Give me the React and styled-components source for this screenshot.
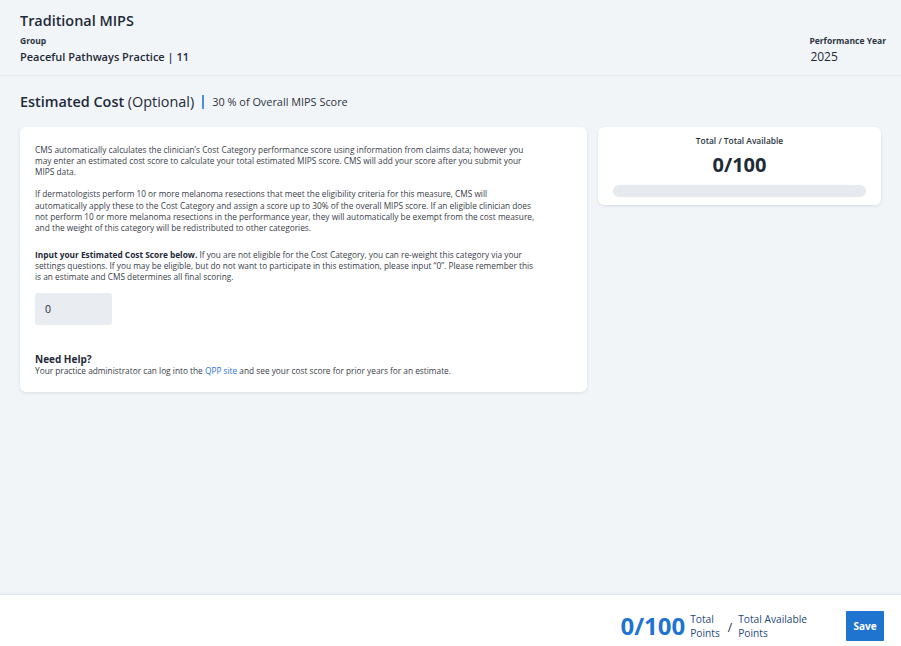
import React, { useState } from "react";
import styled, { createGlobalStyle } from "styled-components";

const GlobalStyle = createGlobalStyle`
  html, body {
    margin: 0;
    padding: 0;
    height: 100%;
  }
  body {
    font-family: "Open Sans", "Noto Sans", Arial, sans-serif;
    color: #1e2a38;
    background: #f2f5f8;
  }
  #root {
    height: 100%;
  }
`;

export default function App() {
  const [cost, setCost] = useState("0");

  return (
    <>
      <GlobalStyle />
      <Page>
        <Header>
          <div>
            <Title>Traditional MIPS</Title>
            <Label>Group</Label>
            <Value>Peaceful Pathways Practice | 11</Value>
          </div>
          <YearBlock>
            <Label>Performance Year</Label>
            <Value $light>2025</Value>
          </YearBlock>
        </Header>

        <Main>
          <SectionTitle>
            <strong>Estimated Cost</strong> (Optional)
            <Divider />
            <small>30 % of Overall MIPS Score</small>
          </SectionTitle>

          <Columns>
            <Card $pad="16.5px 15px 15.5px">
              <Para>
                CMS automatically calculates the clinician’s Cost Category performance score using information from claims data; however you
                <br />
                may enter an estimated cost score to calculate your total estimated MIPS score. CMS will add your score after you submit your
                <br />
                MIPS data.
              </Para>
              <Para $top="11px">
                If dermatologists perform 10 or more melanoma resections that meet the eligibility criteria for this measure, CMS will
                <br />
                automatically apply these to the Cost Category and assign a score up to 30% of the overall MIPS score. If an eligible clinician does
                <br />
                not perform 10 or more melanoma resections in the performance year, they will automatically be exempt from the cost measure,
                <br />
                and the weight of this category will be redistributed to other categories.
              </Para>
              <Para $top="15px">
                <b>Input your Estimated Cost Score below.</b> If you are not eligible for the Cost Category, you can re-weight this category via your
                <br />
                settings questions. If you may be eligible, but do not want to participate in this estimation, please input “0”. Please remember this
                <br />
                is an estimate and CMS determines all final scoring.
              </Para>
              <ScoreInput value={cost} onChange={(e) => setCost(e.target.value)} />
              <HelpTitle>Need Help?</HelpTitle>
              <HelpText>
                Your practice administrator can log into the <a href="#">QPP site</a> and see your cost score for prior years for an estimate.
              </HelpText>
            </Card>

            <Card $pad="8px 15px 8px" $center>
              <TotalLabel>Total / Total Available</TotalLabel>
              <TotalValue>0/100</TotalValue>
              <Progress>
                <ProgressFill style={{ width: "0%" }} />
              </Progress>
            </Card>
          </Columns>
        </Main>

        <Footer>
          <BigScore>0/100</BigScore>
          <SmallLabel>
            Total
            <br />
            Points
          </SmallLabel>
          <Slash>/</Slash>
          <SmallLabel>
            Total Available
            <br />
            Points
          </SmallLabel>
          <SaveButton>Save</SaveButton>
        </Footer>
      </Page>
    </>
  );
}

const Page = styled.div`
  min-height: 100%;
  display: flex;
  flex-direction: column;
`;

const Header = styled.header`
  display: flex;
  justify-content: space-between;
  padding: 10px 15px 10px 20px;
  border-bottom: 1px solid #e8ebee;
  height: 55px;
`;

const Title = styled.h1`
  margin: 0 0 3px;
  font-size: 14.4px;
  font-weight: 600;
  line-height: 22px;
  color: #1e2a38;
`;

const Label = styled.div`
  font-size: 8.5px;
  font-weight: 700;
  line-height: 11px;
  color: #2b3440;
  white-space: nowrap;
`;

const Value = styled.div`
  margin-top: 3px;
  font-size: ${(p) => (p.$light ? "12px" : "11px")};
  font-weight: ${(p) => (p.$light ? 500 : 600)};
  line-height: 16px;
  padding-left: ${(p) => (p.$light ? "1px" : "0")};
  color: #1e2a38;
`;

const YearBlock = styled.div`
  padding-top: 25px;
`;

const Main = styled.main`
  flex: 1;
  padding: 16px 20px;
`;

const SectionTitle = styled.div`
  display: flex;
  align-items: center;
  font-size: 14.4px;
  line-height: 20px;
  color: #1e2a38;
  white-space: pre;
  strong {
    font-weight: 600;
  }
  small {
    font-size: 10.9px;
    color: #2b3440;
  }
`;

const Divider = styled.span`
  display: inline-block;
  width: 2px;
  height: 14px;
  background: #4a8fd8;
  margin: 0 8px;
`;

const Columns = styled.div`
  display: grid;
  grid-template-columns: 567px 283px;
  gap: 11px;
  align-items: start;
  margin-top: 15px;
`;

const Card = styled.section`
  background: #fff;
  border-radius: 6px;
  box-shadow: 0 1px 3px rgba(30, 42, 56, 0.12);
  padding: ${(p) => p.$pad};
  text-align: ${(p) => (p.$center ? "center" : "left")};
`;

const Para = styled.p`
  margin: ${(p) => p.$top || "0"} 0 0;
  font-size: 8.3px;
  line-height: 11.3px;
  color: #38404a;
  white-space: nowrap;
  b {
    font-weight: 700;
    color: #1e2a38;
  }
`;

const ScoreInput = styled.input`
  display: block;
  box-sizing: border-box;
  width: 77px;
  height: 32px;
  margin-top: 10.5px;
  padding: 0 10px;
  border: none;
  border-radius: 3px;
  background: #e9ecf0;
  font-family: inherit;
  font-size: 10.5px;
  color: #1e2a38;
  outline: none;
`;

const HelpTitle = styled.div`
  margin-top: 28.5px;
  font-size: 10px;
  font-weight: 700;
  line-height: 13px;
  color: #1e2a38;
`;

const HelpText = styled.div`
  font-size: 8.3px;
  line-height: 10px;
  color: #38404a;
  a {
    color: #1f74d0;
    text-decoration: none;
  }
`;

const TotalLabel = styled.div`
  font-size: 8.4px;
  font-weight: 600;
  line-height: 12px;
  color: #2b3440;
`;

const TotalValue = styled.div`
  margin-top: 5px;
  font-size: 20px;
  font-weight: 700;
  line-height: 26px;
  color: #1e2a38;
`;

const Progress = styled.div`
  margin-top: 7px;
  height: 12px;
  border-radius: 6px;
  background: #e6e9ee;
  overflow: hidden;
`;

const ProgressFill = styled.div`
  height: 100%;
  background: #1f74d0;
`;

const Footer = styled.footer`
  display: flex;
  align-items: center;
  justify-content: flex-end;
  box-sizing: border-box;
  height: 52px;
  padding: 11px 17px 0 20px;
  background: #fff;
  border-top: 1px solid #e4e8ec;
  box-shadow: 0 -1px 2px rgba(30, 42, 56, 0.05);
`;

const BigScore = styled.div`
  font-size: 24px;
  font-weight: 700;
  color: #1f74d0;
  line-height: 30px;
  margin-right: 5px;
`;

const SmallLabel = styled.div`
  font-size: 10.2px;
  font-weight: 500;
  line-height: 14px;
  color: #1f4a7a;
`;

const Slash = styled.div`
  font-size: 12px;
  color: #1e2a38;
  margin: 2px 6px 0 8px;
`;

const SaveButton = styled.button`
  margin-left: 39px;
  width: 38px;
  height: 30px;
  border: none;
  border-radius: 1px;
  background: #1f74d0;
  color: #fff;
  font-family: inherit;
  font-size: 10px;
  font-weight: 700;
  cursor: pointer;
`;
